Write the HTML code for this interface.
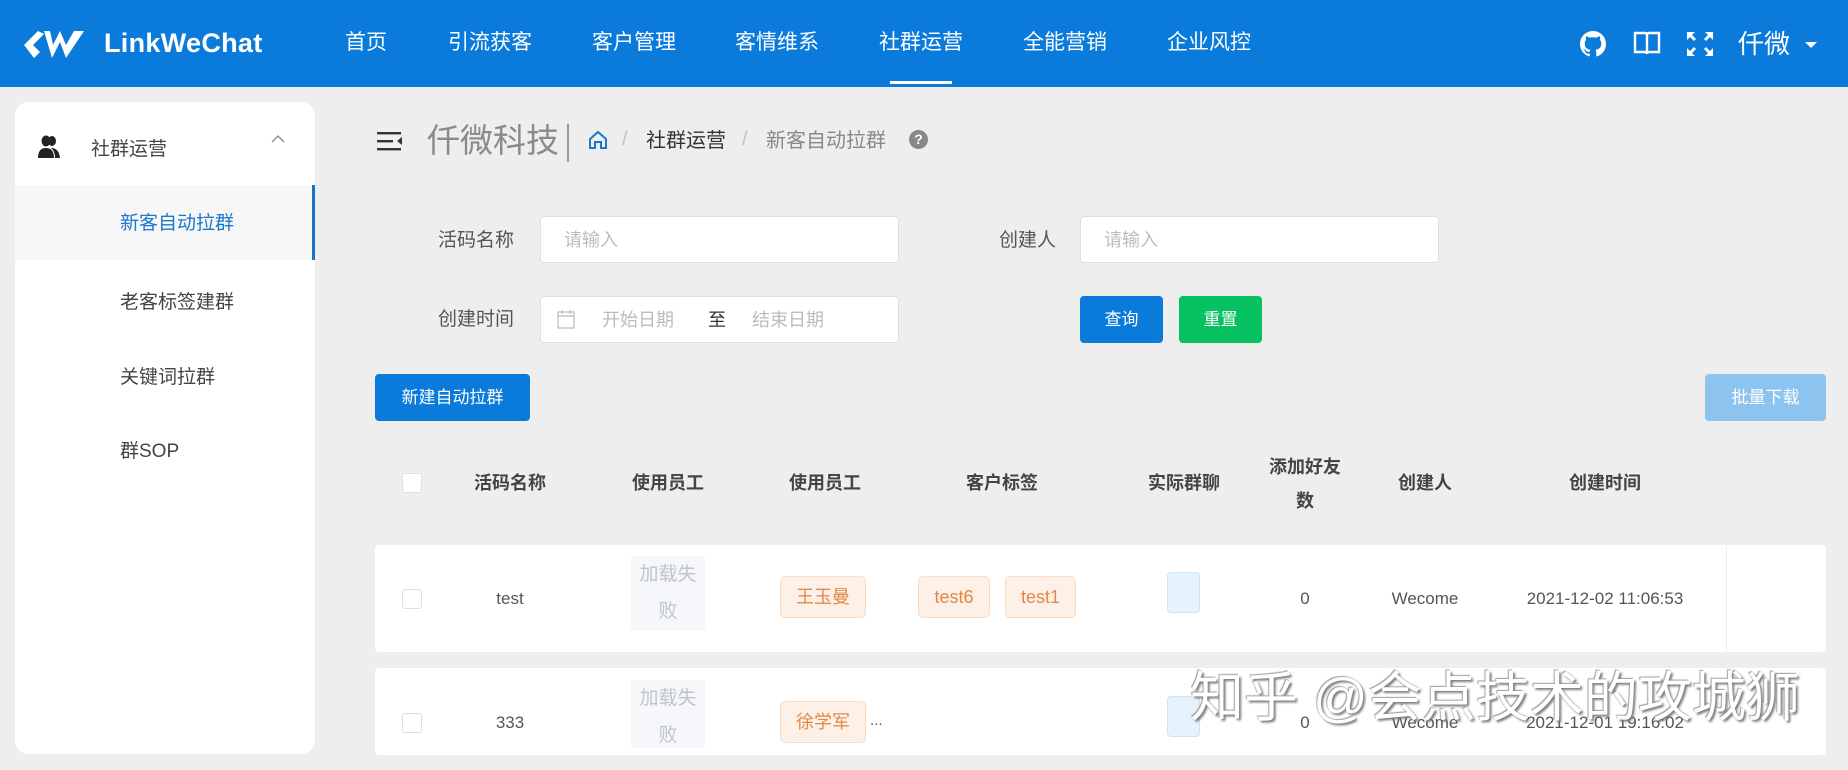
<!DOCTYPE html>
<html><head><meta charset="utf-8"><style>
*{margin:0;padding:0;box-sizing:border-box}
body{width:1848px;height:770px;overflow:hidden;background:#eeeeee;font-family:"Liberation Sans","Noto Sans CJK SC",sans-serif;position:relative;color:#333}
.a{position:absolute;white-space:nowrap}
.hdr{position:absolute;left:0;top:0;width:1848px;height:87px;background:#0a7bda}
.nav{color:#fff;font-size:21px;top:30px;line-height:26px}
.side{position:absolute;left:15px;top:102px;width:300px;height:652px;background:#fff;border-radius:14px;overflow:hidden}
.lbl{font-size:19px;color:#555;line-height:24px}
.inp{position:absolute;background:#fff;border:1px solid #dcdfe6;border-radius:4px;height:47px}
.ph{color:#b8bcc4;font-size:18px;line-height:22px}
.btn{position:absolute;border-radius:4px;color:#fff;font-size:17px;text-align:center;line-height:47px;height:47px}
.th{font-size:18px;font-weight:bold;color:#444;line-height:34px;text-align:center;transform:translateX(-50%)}
.td{font-size:17px;color:#555;line-height:22px;transform:translateX(-50%)}
.row{position:absolute;left:375px;width:1451px;background:#fff;border-radius:4px}
.cb{position:absolute;width:20px;height:20px;border:1px solid #dcdfe6;border-radius:3px;background:#fff}
.fail{position:absolute;width:74px;height:75px;background:#f5f7fa;color:#c0c4cc;font-size:19px;line-height:37px;text-align:center}
.tag{position:absolute;height:42px;background:#fdf0e6;border:1px solid #fadcc4;border-radius:5px;color:#e08a4a;font-size:18px;line-height:40px;text-align:center}
.gc{position:absolute;width:33px;height:41px;background:#e6f2fc;border:1px solid #cde3f7;border-radius:4px}
</style></head><body>
<div class="hdr"></div>
<svg class="a" style="left:22px;top:28px" width="74" height="32" viewBox="0 0 74 32"><path d="M16 3 L2 17 L12 30 L18 24 L11 17 L22 6 Z" fill="#fff"/><path d="M22 3 L30 30 L38 14 L44 30 L62 3 L52 3 L44 17 L38 3 L31 17 L28 3Z" fill="#fff"/></svg>
<div class="a" style="left:104px;top:27px;color:#fff;font-size:27px;line-height:32px;font-weight:bold;letter-spacing:0.3px">LinkWeChat</div>
<div class="a nav" style="left:345px">首页</div>
<div class="a nav" style="left:448px">引流获客</div>
<div class="a nav" style="left:592px">客户管理</div>
<div class="a nav" style="left:735px">客情维系</div>
<div class="a nav" style="left:879px">社群运营</div>
<div class="a nav" style="left:1023px">全能营销</div>
<div class="a nav" style="left:1167px">企业风控</div>
<div class="a" style="left:890px;top:81px;width:62px;height:3px;background:#fff"></div>
<svg class="a" style="left:1580px;top:31px" width="26" height="26" viewBox="0 0 16 16"><path fill="#fff" d="M8 0C3.58 0 0 3.58 0 8c0 3.54 2.290 6.53 5.470 7.59.4.07.55-.17.55-.38v-1.33c-2.23.48-2.7-1.07-2.7-1.070-.36-.92-.89-1.17-.89-1.17-.73-.5.06-.49.06-.49.8.06 1.23.83 1.23.83.72 1.22 1.87.87 2.33.67.07-.52.28-.87.51-1.07-1.78-.2-3.65-.89-3.65-3.95 0-.87.31-1.59.82-2.15-.08-.2-.36-1.02.08-2.12 0 0 .67-.21 2.2.82A7.5 7.5 0 0 1 8 3.87c.68 0 1.36.09 2 .27 1.53-1.04 2.2-.82 2.2-.82.44 1.1.16 1.92.08 2.12.51.56.82 1.27.82 2.15 0 3.07-1.87 3.75-3.65 3.950.29.25.54.73.54 1.48v2.2c0 .21.15.46.55.38A8 8 0 0 0 16 8c0-4.42-3.58-8-8-8z"/></svg>
<svg class="a" style="left:1633px;top:31px" width="28" height="25" viewBox="0 0 28 25"><path d="M2 2h10q2 0 2 2v19q0-2-2-2H2Z M26 2H16q-2 0-2 2v19q0-2 2-2h10Z" fill="none" stroke="#fff" stroke-width="2.4"/></svg>
<svg class="a" style="left:1686px;top:31px" width="28" height="26" viewBox="0 0 28 26" fill="#fff"><path d="M1 1h8l-3 3 4 4-2 2-4-4-3 3Z M27 1h-8l3 3-4 4 2 2 4-4 3 3Z M1 25h8l-3-3 4-4-2-2-4 4-3-3Z M27 25h-8l3-3-4-4 2-2 4 4 3-3Z"/></svg>
<div class="a" style="left:1738px;top:28px;color:#fff;font-size:26px;line-height:32px">仟微</div>
<div class="a" style="left:1805px;top:42px;width:0;height:0;border-left:6px solid transparent;border-right:6px solid transparent;border-top:6px solid #fff"></div>

<div class="side">
<svg class="a" style="left:23px;top:33px" width="22" height="24" viewBox="0 0 22 24" fill="#222"><ellipse cx="8" cy="6" rx="4.5" ry="5.5"/><path d="M0 23q0-10 8-10t8 10Z"/><ellipse cx="14" cy="6" rx="4" ry="5"/><path d="M13 13q8 0 9 10h-5q0-7-4-10Z"/></svg>
<div class="a" style="left:76px;top:36px;font-size:19px;color:#444;line-height:24px">社群运营</div>
<svg class="a" style="left:256px;top:32px" width="14" height="10" viewBox="0 0 14 10"><path d="M1 8L7 2L13 8" fill="none" stroke="#888" stroke-width="1.3"/></svg>
<div class="a" style="left:0;top:83px;width:300px;height:75px;background:#f7f7f7"></div>
<div class="a" style="left:297px;top:83px;width:3px;height:75px;background:#1a73c9"></div>
<div class="a" style="left:105px;top:110px;font-size:19px;color:#1b78cf;line-height:24px">新客自动拉群</div>
<div class="a" style="left:105px;top:189px;font-size:19px;color:#444;line-height:24px">老客标签建群</div>
<div class="a" style="left:105px;top:264px;font-size:19px;color:#444;line-height:24px">关键词拉群</div>
<div class="a" style="left:105px;top:338px;font-size:19px;color:#444;line-height:24px">群SOP</div>
</div>

<svg class="a" style="left:377px;top:131px" width="26" height="20" viewBox="0 0 26 20" fill="#333"><rect x="0" y="1" width="24" height="2.4"/><rect x="0" y="9" width="16" height="2.4"/><rect x="0" y="17" width="24" height="2.4"/><path d="M25 6v8l-5-4Z"/></svg>
<div class="a" style="left:427px;top:121px;font-size:33px;color:#8a8a8a;line-height:40px">仟微科技</div>
<div class="a" style="left:567px;top:124px;width:2px;height:38px;background:#999"></div>
<svg class="a" style="left:587px;top:129px" width="22" height="22" viewBox="0 0 22 22"><path d="M3 10L11 3L19 10V19H14V13H8V19H3Z" fill="none" stroke="#1b78cf" stroke-width="2"/></svg>
<div class="a" style="left:622px;top:128px;font-size:20px;color:#c0c4cc">/</div>
<div class="a" style="left:646px;top:128px;font-size:20px;color:#333;line-height:26px">社群运营</div>
<div class="a" style="left:742px;top:128px;font-size:20px;color:#c0c4cc">/</div>
<div class="a" style="left:766px;top:128px;font-size:20px;color:#888;line-height:26px">新客自动拉群</div>
<div class="a" style="left:909px;top:130px;width:19px;height:19px;border-radius:50%;background:#888;color:#fff;font-size:14px;font-weight:bold;text-align:center;line-height:19px">?</div>

<div class="a lbl" style="left:438px;top:229px">活码名称</div>
<div class="inp" style="left:540px;top:216px;width:359px"><span class="a ph" style="left:23px;top:12px">请输入</span></div>
<div class="a lbl" style="left:999px;top:229px">创建人</div>
<div class="inp" style="left:1080px;top:216px;width:359px"><span class="a ph" style="left:23px;top:12px">请输入</span></div>
<div class="a lbl" style="left:438px;top:308px">创建时间</div>
<div class="inp" style="left:540px;top:296px;width:359px">
<svg class="a" style="left:16px;top:13px" width="18" height="19" viewBox="0 0 18 19"><rect x="1" y="2" width="16" height="16" fill="none" stroke="#c0c4cc" stroke-width="1.4"/><path d="M1 6h16M5 0v4M13 0v4" stroke="#c0c4cc" stroke-width="1.4"/></svg>
<span class="a ph" style="left:61px;top:12px">开始日期</span><span class="a" style="left:167px;top:12px;font-size:18px;color:#333;line-height:22px">至</span><span class="a ph" style="left:211px;top:12px">结束日期</span></div>
<div class="btn" style="left:1080px;top:296px;width:83px;background:#0a7bda">查询</div>
<div class="btn" style="left:1179px;top:296px;width:83px;background:#07c160">重置</div>
<div class="btn" style="left:375px;top:374px;width:155px;background:#0a7bda">新建自动拉群</div>
<div class="btn" style="left:1705px;top:374px;width:121px;background:#8dc4ef">批量下载</div>

<div class="cb" style="left:402px;top:473px"></div>
<div class="a th" style="left:510px;top:466px">活码名称</div>
<div class="a th" style="left:668px;top:466px">使用员工</div>
<div class="a th" style="left:825px;top:466px">使用员工</div>
<div class="a th" style="left:1002px;top:466px">客户标签</div>
<div class="a th" style="left:1184px;top:466px">实际群聊</div>
<div class="a th" style="left:1305px;top:450px">添加好友<br>数</div>
<div class="a th" style="left:1425px;top:466px">创建人</div>
<div class="a th" style="left:1605px;top:466px">创建时间</div>

<div class="row" style="top:545px;height:107px"></div>
<div class="a" style="left:1726px;top:545px;width:1px;height:107px;background:#eee"></div>
<div class="cb" style="left:402px;top:589px"></div>
<div class="a td" style="left:510px;top:588px">test</div>
<div class="fail" style="left:631px;top:556px">加载失<br>败</div>
<div class="tag" style="left:780px;top:576px;width:86px">王玉曼</div>
<div class="tag" style="left:918px;top:576px;width:72px">test6</div>
<div class="tag" style="left:1005px;top:576px;width:71px">test1</div>
<div class="gc" style="left:1167px;top:572px"></div>
<div class="a td" style="left:1305px;top:588px">0</div>
<div class="a td" style="left:1425px;top:588px">Wecome</div>
<div class="a td" style="left:1605px;top:588px">2021-12-02 11:06:53</div>

<div class="row" style="top:668px;height:87px"></div>
<div class="cb" style="left:402px;top:713px"></div>
<div class="a td" style="left:510px;top:712px">333</div>
<div class="fail" style="left:631px;top:680px;height:68px">加载失<br>败</div>
<div class="tag" style="left:780px;top:701px;width:86px">徐学军</div>
<div class="a" style="left:870px;top:712px;font-size:15px;color:#555">...</div>
<div class="gc" style="left:1167px;top:696px"></div>
<div class="a td" style="left:1305px;top:712px">0</div>
<div class="a td" style="left:1425px;top:712px">Wecome</div>
<div class="a td" style="left:1605px;top:712px">2021-12-01 19:16:02</div>

<div class="a" style="left:1190px;top:666px;font-size:54px;line-height:64px;color:#fff;text-shadow:2px 2px 2px #777,-1px -1px 1px #999;opacity:.95">知乎 @会点技术的攻城狮</div>
</body></html>
